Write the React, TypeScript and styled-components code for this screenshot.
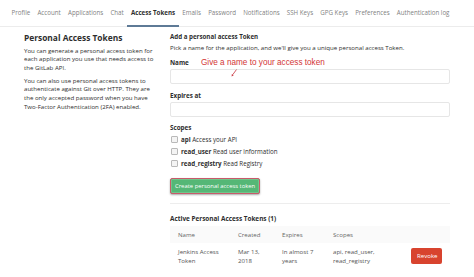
import React from "react";
import styled, { createGlobalStyle } from "styled-components";

const GlobalStyle = createGlobalStyle`
    body {
        margin: 0;
        background: #fff;
        font-family: "Open Sans", "Noto Sans", sans-serif;
        color: #2e2e2e;
    }
`;

const Page = styled.div`
    width: 474px;
    height: 277px;
    overflow: hidden;
    background: #fff;
`;

const NavBar = styled.nav`
    display: flex;
    align-items: stretch;
    height: 26px;
    padding-left: 8px;
    border-bottom: 1px solid #ececec;
`;

const NavItem = styled.div<{ $active?: boolean }>`
    display: flex;
    align-items: center;
    padding: 0 3.6px;
    font-size: 6.2px;
    white-space: nowrap;
    color: ${(p) => (p.$active ? "#2e2e2e" : "#7f7f7f")};
    font-weight: ${(p) => (p.$active ? 700 : 400)};
    border-bottom: 2px solid ${(p) => (p.$active ? "#5e7a96" : "transparent")};
    margin-bottom: -1px;
`;

const Content = styled.div`
    display: flex;
    padding-left: 24px;
`;

const Sidebar = styled.div`
    width: 130px;
    padding-top: 5px;
    margin-right: 16px;

    h4 {
        margin: 0;
        font-size: 8.4px;
        line-height: 11px;
        font-weight: 700;
    }

    p {
        margin: 3.5px 0 0;
        font-size: 6.1px;
        line-height: 8.7px;
    }

    p + p {
        margin-top: 4px;
    }
`;

const Main = styled.div`
    width: 280px;
    padding-top: 5px;
    line-height: 9px;
`;

const SubTitle = styled.h5`
    margin: 0;
    font-size: 6.2px;
    line-height: 9px;
    font-weight: 700;
`;

const Hint = styled.p`
    margin: 2px 0 0;
    font-size: 6.1px;
    line-height: 9px;
`;

const Label = styled.div<{ $gap: number }>`
    position: relative;
    margin-top: ${(p) => p.$gap}px;
    font-size: 6.3px;
    line-height: 9px;
    font-weight: 700;
`;

const Callout = styled.span`
    position: absolute;
    left: 31px;
    top: -0.5px;
    font-family: "Liberation Sans", Arial, sans-serif;
    font-weight: 400;
    font-size: 8.2px;
    line-height: 9.5px;
    color: #d33535;
    white-space: nowrap;
`;

const Arrow = styled.svg`
    position: absolute;
    left: 61px;
    top: 11px;
`;

const Input = styled.div`
    height: 13px;
    margin-top: 2px;
    border: 1px solid #e6e6e6;
    border-radius: 2px;
    background: #fff;
`;

const ScopeList = styled.div`
    display: flex;
    flex-direction: column;
    gap: 3px;
    margin-top: 3px;
`;

const Scope = styled.label`
    display: flex;
    align-items: center;
    gap: 3px;
    height: 9px;
    padding-left: 1px;
    font-size: 6.2px;

    b {
        font-weight: 700;
    }
`;

const Box = styled.span`
    width: 5px;
    height: 5px;
    border: 1px solid #b9b9b9;
    border-radius: 1px;
    background: #f4f4f4;
`;

const CreateButton = styled.button`
    display: block;
    margin-top: 10px;
    height: 16px;
    padding: 0 4px;
    border: 1.5px solid #c85a6a;
    border-radius: 2px;
    background: #55b776;
    box-shadow: 0 1px 2px rgba(0, 0, 0, 0.35), inset 0 0 0 1px #6fc58b;
    color: #fff;
    font-family: "Open Sans", "Noto Sans", sans-serif;
    font-size: 5.9px;
    cursor: pointer;
`;

const Divider = styled.hr`
    margin: 9px 0 10px;
    border: none;
    border-top: 1px solid #ededed;
`;

const TableTitle = styled.h5`
    margin: 0;
    font-size: 6.4px;
    line-height: 9px;
    font-weight: 700;
`;

const Table = styled.div`
    margin-top: 3px;
    font-size: 6.1px;
`;

const Row = styled.div<{ $head?: boolean }>`
    display: grid;
    grid-template-columns: 60px 44px 51px 69px 1fr;
    align-items: center;
    padding: 0 8px;
    height: ${(p) => (p.$head ? "17px" : "25px")};
    background: ${(p) => (p.$head ? "#fafafa" : "#fff")};
    color: ${(p) => (p.$head ? "#666" : "#555")};
    line-height: 9px;
`;

const RevokeButton = styled.button`
    justify-self: end;
    height: 16px;
    width: 31px;
    border: none;
    border-radius: 2px;
    background: #d8432e;
    color: #fff;
    font-family: "Open Sans", "Noto Sans", sans-serif;
    font-size: 6.1px;
`;

const navItems = [
    "Profile",
    "Account",
    "Applications",
    "Chat",
    "Access Tokens",
    "Emails",
    "Password",
    "Notifications",
    "SSH Keys",
    "GPG Keys",
    "Preferences",
    "Authentication log",
];

const scopes = [
    ["api", "Access your API"],
    ["read_user", "Read user information"],
    ["read_registry", "Read Registry"],
];

const App: React.FC = () => {
    return (
        <Page>
            <GlobalStyle />
            <NavBar>
                {navItems.map((item) => (
                    <NavItem key={item} $active={item === "Access Tokens"}>
                        {item}
                    </NavItem>
                ))}
            </NavBar>
            <Content>
                <Sidebar>
                    <h4>Personal Access Tokens</h4>
                    <p>
                        You can generate a personal access token for each
                        application you use that needs access to the GitLab
                        API.
                    </p>
                    <p>
                        You can also use personal access tokens to
                        authenticate against Git over HTTP. They are the only
                        accepted password when you have Two-Factor
                        Authentication (2FA) enabled.
                    </p>
                </Sidebar>
                <Main>
                    <SubTitle>Add a personal access Token</SubTitle>
                    <Hint>
                        Pick a name for the application, and we'll give you a
                        unique personal access Token.
                    </Hint>
                    <Label $gap={6}>
                        Name
                        <Callout>Give a name to your access token</Callout>
                        <Arrow width="6" height="8" viewBox="0 0 6 8">
                            <path d="M5.5 0.5 L1.8 5.6" stroke="#c8323c" strokeWidth="0.8" />
                            <path d="M0.6 7.4 L0.9 4.9 L2.7 6.2 Z" fill="#c8323c" />
                        </Arrow>
                    </Label>
                    <Input />
                    <Label $gap={7}>Expires at</Label>
                    <Input />
                    <Label $gap={6}>Scopes</Label>
                    <ScopeList>
                        {scopes.map(([name, desc]) => (
                            <Scope key={name}>
                                <Box />
                                <span>
                                    <b>{name}</b> {desc}
                                </span>
                            </Scope>
                        ))}
                    </ScopeList>
                    <CreateButton>Create personal access token</CreateButton>
                    <Divider />
                    <TableTitle>Active Personal Access Tokens (1)</TableTitle>
                    <Table>
                        <Row $head>
                            <span>Name</span>
                            <span>Created</span>
                            <span>Expires</span>
                            <span>Scopes</span>
                            <span />
                        </Row>
                        <Row>
                            <span>
                                Jenkins Access
                                <br />
                                Token
                            </span>
                            <span>
                                Mar 13,
                                <br />
                                2018
                            </span>
                            <span>
                                In almost 7
                                <br />
                                years
                            </span>
                            <span>
                                api, read_user,
                                <br />
                                read_registry
                            </span>
                            <RevokeButton>Revoke</RevokeButton>
                        </Row>
                    </Table>
                </Main>
            </Content>
        </Page>
    );
};

export default App;
